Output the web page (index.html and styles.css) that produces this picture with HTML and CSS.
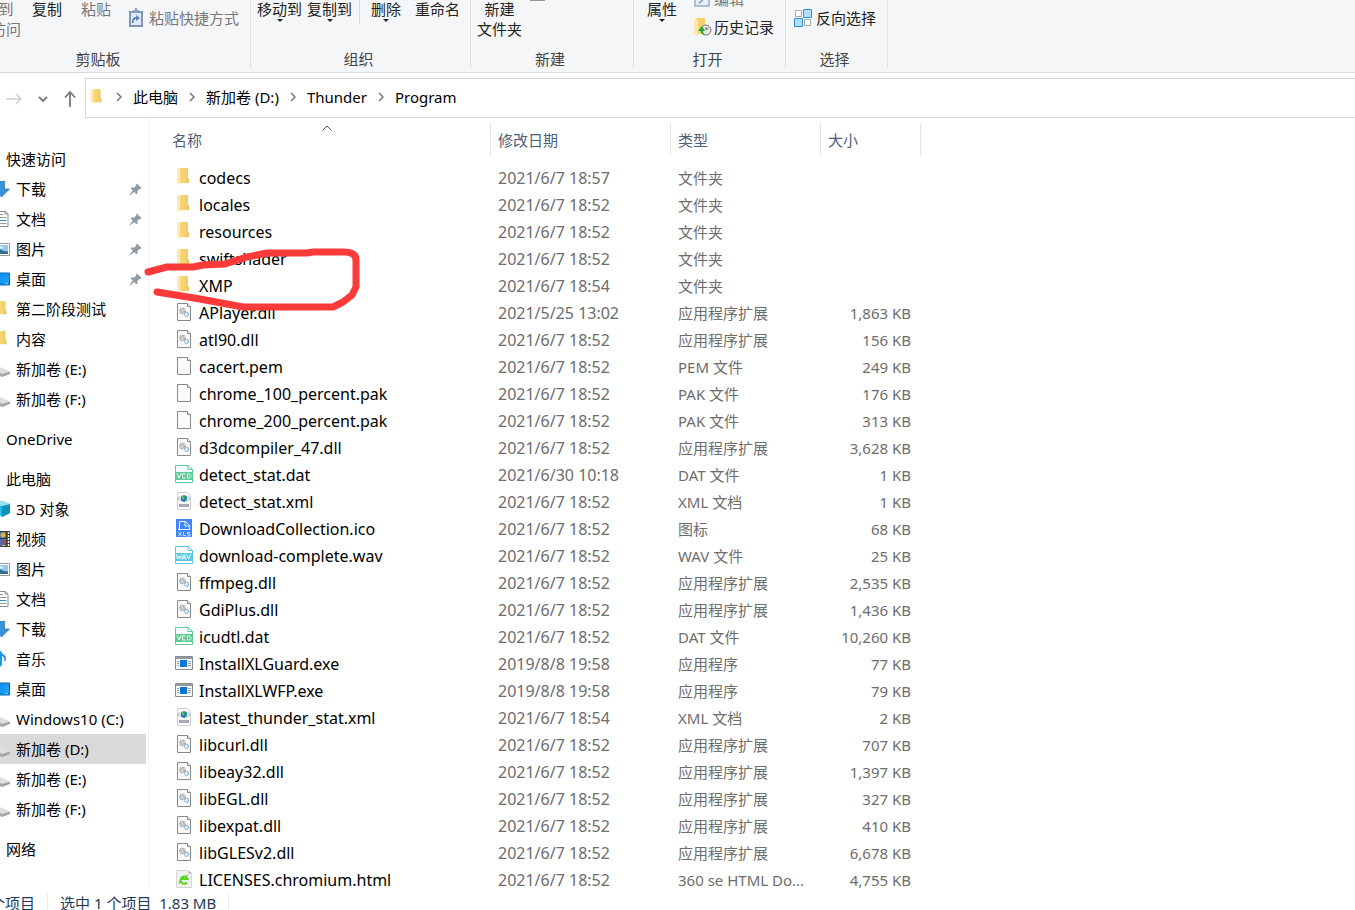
FILE: index.html
```html
<!DOCTYPE html>
<html lang="zh-CN">
<head>
<meta charset="utf-8">
<title>Program</title>
<link rel="stylesheet" href="styles.css">
</head>
<body>
<svg class="defs" aria-hidden="true">
  <defs>
    <linearGradient id="g-folder" x1="0" x2="1"><stop offset="0" stop-color="#fbdc82"/><stop offset="1" stop-color="#f0c95f"/></linearGradient>
    <linearGradient id="g-blue" x1="0" y1="0" x2="1" y2="1"><stop offset="0" stop-color="#0c86ea"/><stop offset="1" stop-color="#22a7fb"/></linearGradient>
  </defs>
  <symbol id="folder" viewBox="0 0 18 18"><path d="M4 0h9v10.500h1V15H5z" fill="url(#g-folder)"/><path d="M2 0l4 2v15l-4-2z" fill="#ffe9ac"/><path d="M13 10.500v4.500M6 2v13" stroke="#e9bd55" stroke-width=".6"/></symbol>
  <symbol id="page" viewBox="0 0 18 18"><path d="M2.500.5h10l3 3v14h-13z" fill="#fafafa" stroke="#87898b"/><path d="M12.500.5v3h3" fill="#fff" stroke="#87898b"/></symbol>
  <symbol id="dll" viewBox="0 0 18 18"><use href="#page"/><circle cx="7.500" cy="8" r="2.600" fill="none" stroke="#8d9398" stroke-width="1.500" stroke-dasharray="1 .6"/><circle cx="7.500" cy="8" r="1.300" fill="none" stroke="#8d9398" stroke-width=".7"/><circle cx="11.500" cy="11.300" r="2" fill="#e9f4fb" stroke="#78aace" stroke-width="1.300" stroke-dasharray="1 .5"/></symbol>
  <symbol id="vcd" viewBox="0 0 18 18"><path d="M.5 17.500V.5H13l4.500 4v13z" fill="#fff" stroke="#5ccb94"/><path d="M13 0v4.500h5" fill="none" stroke="#5ccb94"/><path d="M0 7h18v8H0z" fill="#5ccb94"/><path d="M2 8.500l2 4.500 2-4.500M10.500 9H7.500v4h3M12.500 9h2l1.500 1.500v1L14.500 13h-2z" fill="none" stroke="#fff"/></symbol>
  <symbol id="wav" viewBox="0 0 18 18"><path d="M.5 17.500V.5H13l4.500 4v13z" fill="#fff" stroke="#5bc9e2"/><path d="M13 0v4.500h5" fill="none" stroke="#5bc9e2"/><path d="M0 7h18v8H0z" fill="#5bc9e2"/><path d="M1.500 8.500l1 4.500 1.500-3 1.500 3 1-4.500M7 13.500l2-5 2 5M8 12h2M11.500 8.500l2 4.500 2-4.500" fill="none" stroke="#fff"/></symbol>
  <symbol id="ico" viewBox="0 0 18 18"><path d="M1 0h16v18H1z" fill="#4285f6"/><path d="M4.500 11V2.500h6l4 4V11M10 2.500v4.500h4.500M3 10.500h12" fill="none" stroke="#fff" stroke-width=".9"/><path d="M3.500 13l3 4M6.500 13l-3 4M8.500 13v3.500h2.500M15 13.500h-2.500v1.500h2.500v2h-3" fill="none" stroke="#dbe8ff" stroke-width=".9"/></symbol>
  <symbol id="xml" viewBox="0 0 18 18"><path d="M2.500.5h10l3 3v14h-13z" fill="#f8f8f8" stroke="#d2d2d2"/><circle cx="9" cy="6.500" r="3.200" fill="#2277b8"/><path d="M7 4l3 1-1 2-2 .5zM10 7.500l2-1-1 3z" fill="#63c64f"/><path d="M5 4.500L3 6.500l2 2M13 4.500l2 2-2 2" fill="none" stroke="#58a8d0"/><path d="M4 12h10v3H4z" fill="#a9a8b9"/></symbol>
  <symbol id="exe" viewBox="0 0 18 18"><path d="M.5 2.500h17v13H.5z" fill="#fff" stroke="#858b91"/><path d="M1 3h16v2H1z" fill="#9299a0"/><path d="M5 6h7v7H5z" fill="#0875db"/><path d="M2 7.500h2M2 9.500h2M2 11.500h2M13 7.500h3M13 9.500h3M13 11.500h3" stroke="#91989e"/></symbol>
  <symbol id="html" viewBox="0 0 18 18"><path d="M1.500.5h12l3 3v14h-15z" fill="#f1f1f1" stroke="#d4d4d4"/><path d="M13.500.5v3h3z" fill="#aaa"/><path d="M12 12.500a3.600 3.600 0 1 1 .6-3.500H6" fill="none" stroke="#55d51b" stroke-width="2"/><path d="M4 14Q4 8 13 5" fill="none" stroke="#55d51b"/></symbol>
  <symbol id="pin" viewBox="0 0 14 14"><path d="M8.500.5l5 5-1 1-1-.3-2.500 2.500.3 2.300-1.300 1.200-2.500-2.500L1 13.500l-.6-.3L4 8.200 1.800 6 3 4.700l2.500.3L8 2.500l-.4-1z" fill="#909ba3"/></symbol>
  <symbol id="down" viewBox="0 0 16 16"><path d="M3.500 0h7v8h5L7.500 16-.5 8h4z" fill="#3993df" stroke="#2373b8" stroke-width=".7"/></symbol>
  <symbol id="doc" viewBox="0 0 16 16"><path d="M1 .5h10.500L14 3v12.500H1z" fill="#fff" stroke="#8b8d90"/><path d="M11 .5V3h3" fill="none" stroke="#8b8d90"/><path d="M3 3.500h6M3 6.500h9.500M3 12.500h9.500" stroke="#8d9ba5"/><path d="M3 9.500h9.500" stroke="#3e91cc"/></symbol>
  <symbol id="picture" viewBox="0 0 16 16"><path d="M.5 2.500h15v12H.5z" fill="#fff" stroke="#999"/><path d="M2 4h12v9H2z" fill="#8dcaf3"/><path d="M2 10l4-2 4 2 4 .5V13H2z" fill="#356b8b"/><path d="M2 5.500h7v2H2z" fill="#e7f6ff"/></symbol>
  <symbol id="desktop" viewBox="0 0 16 16"><path d="M.5 2h15v12H.5z" fill="url(#g-blue)" stroke="#0868b0"/><path d="M1 12.500h14" stroke="#0878c5"/><path d="M11 12.500h1M13 12.500h1" stroke="#fff"/></symbol>
  <symbol id="drive" viewBox="0 0 16 16"><path d="M0 8l6-1 10 4v2L8 16l-8-4z" fill="#a4a5a8"/><path d="M0 8l6-2 10 4.500L8 13z" fill="#dedfe1"/></symbol>
  <symbol id="cube" viewBox="0 0 16 16"><path d="M1 3l7-3 8 3v9l-8 4-7-4z" fill="#28b8da"/><path d="M8 5l8-2v9l-8 4z" fill="#0d91bd"/><path d="M1 3l7-3 8 3-8 2z" fill="#91e4ef"/></symbol>
  <symbol id="video" viewBox="0 0 16 16"><path d="M0 0h16v16H0z" fill="#3b3b3b"/><path d="M3 1h9v6H3zM3 8h9v7H3z" fill="#466eb3"/><circle cx="9" cy="4" r="2.500" fill="#e3b72e"/><path d="M7 10h5l-2 3z" fill="#c93631"/><path d="M8 14.500h3" stroke="#efce32"/><path d="M14.500 1v15" stroke="#fff" stroke-width="1.500" stroke-dasharray="2 1"/></symbol>
  <symbol id="music" viewBox="0 0 16 16"><path d="M7 0c1 4 6 4 5 9l-2 2c1-3 0-5-2-6v8c0 4-7 4-7 0 0-3 4-4 5-2V0z" fill="#1696e4"/></symbol>
  <symbol id="pc" viewBox="0 0 16 16"><path d="M0 3h16v9H0zM4 14h8" fill="#dceefa" stroke="#69727a" stroke-width="2"/></symbol>
  <symbol id="chev" viewBox="0 0 8 10"><path d="M2 1l4 4-4 4" fill="none" stroke="#777" stroke-width="1.500"/></symbol>
  <symbol id="blank" viewBox="0 0 16 16"></symbol>
</svg>

<header class="ribbon">
  <section class="group group-clipboard">
    <div class="commands">
      <button class="cmd muted">固定到<br>快速访问</button>
      <button class="cmd">复制</button>
      <button class="cmd cmd-paste muted">粘贴</button>
      <button class="cmd-row muted"><svg width="16" height="20" viewBox="0 0 16 20"><path d="M2 4h12v14H2z" fill="#dfe9f7" stroke="#8196be" stroke-width="2"/><path d="M5 2h2V0h2v2h2v3H5z" fill="#8ca0c4"/><path d="M4 15c0-4 1-6 4-6V7l4 3-4 3v-2c-2 0-3 2-2 4z" fill="#5d83b6"/></svg>粘贴快捷方式</button>
    </div>
    <h2>剪贴板</h2>
  </section>
  <section class="group group-organize">
    <div class="commands">
      <button class="cmd drop">移动到</button>
      <button class="cmd drop">复制到</button>
      <span class="rule"></span>
      <button class="cmd drop">删除</button>
      <button class="cmd cmd-rename">重命名</button>
    </div>
    <h2>组织</h2>
  </section>
  <section class="group group-new">
    <div class="commands"><button class="cmd">新建<br>文件夹</button><span class="new-item"></span></div>
    <h2>新建</h2>
  </section>
  <section class="group group-open">
    <div class="commands">
      <button class="cmd drop">属性</button>
      <div class="stack">
        <button class="cmd-row muted"><svg width="18" height="18" viewBox="0 0 18 18"><path d="M1 1h14v15H1z" fill="#e8f1fb" stroke="#9dabca" stroke-width="1.500"/><path d="M4 13l8-9 2 2-8 8z" fill="#9fb0ce"/></svg>编辑</button>
        <button class="cmd-row"><svg width="18" height="18" viewBox="0 0 18 18"><path d="M2 0h9v16H3z" fill="#f5d170"/><path d="M0 0l4 2v16l-4-2z" fill="#ffeaad"/><circle cx="12" cy="12" r="5" fill="#e7e7e7" stroke="#777"/><path d="M12 9v3l2.500-2" fill="none" stroke="#666"/><path d="M12 17c-5 0-5-3-5-4H4l4-5 3 5H9c0 2 1 3 3 4z" fill="#27a735"/></svg>历史记录</button>
      </div>
    </div>
    <h2>打开</h2>
  </section>
  <section class="group group-select">
    <div class="commands"><button class="cmd-row"><svg width="18" height="18" viewBox="0 0 18 18"><path d="M1.500 1.500h6v6h-6zM10.500 10.500h6v6h-6z" fill="#fff" stroke="#aaa"/><path d="M9.500.5h8v8h-8zM.5 9.500h8v8h-8z" fill="#b3defc" stroke="#2b90dc"/></svg>反向选择</button></div>
    <h2>选择</h2>
  </section>
</header>

<div class="location">
  <div class="history">
    <button aria-label="前进"><svg width="16" height="12" viewBox="0 0 16 12"><path d="M0 6h15M10 1l5 5-5 5" fill="none" stroke="#d0d0d0" stroke-width="1.500"/></svg></button>
    <button aria-label="最近位置"><svg width="10" height="8" viewBox="0 0 10 8"><path d="M1 2l4 4 4-4" fill="none" stroke="#777" stroke-width="1.800"/></svg></button>
    <button aria-label="向上"><svg width="12" height="16" viewBox="0 0 12 16"><path d="M6 16V1M1 6.500L6 1l5 5.500" fill="none" stroke="#777" stroke-width="1.800"/></svg></button>
  </div>
  <nav class="crumbs" aria-label="地址">
    <svg class="place"><use href="#folder"/></svg>
    <svg class="chev"><use href="#chev"/></svg><a href="#pc">此电脑</a>
    <svg class="chev"><use href="#chev"/></svg><a href="#d">新加卷 (D:)</a>
    <svg class="chev"><use href="#chev"/></svg><a href="#thunder">Thunder</a>
    <svg class="chev"><use href="#chev"/></svg><a href="#program">Program</a>
  </nav>
</div>

<div class="body">
  <nav class="tree" aria-label="导航窗格">
    <div class="branch">
      <a class="root" href="#"><svg><use href="#blank"/></svg>快速访问</a>
      <a href="#"><svg><use href="#down"/></svg>下载<svg class="pin"><use href="#pin"/></svg></a>
      <a href="#"><svg><use href="#doc"/></svg>文档<svg class="pin"><use href="#pin"/></svg></a>
      <a href="#"><svg><use href="#picture"/></svg>图片<svg class="pin"><use href="#pin"/></svg></a>
      <a href="#"><svg><use href="#desktop"/></svg>桌面<svg class="pin"><use href="#pin"/></svg></a>
      <a href="#"><svg><use href="#folder"/></svg>第二阶段测试</a>
      <a href="#"><svg><use href="#folder"/></svg>内容</a>
      <a href="#"><svg><use href="#drive"/></svg>新加卷 (E:)</a>
      <a href="#"><svg><use href="#drive"/></svg>新加卷 (F:)</a>
    </div>
    <div class="branch"><a class="root" href="#"><svg><use href="#blank"/></svg>OneDrive</a></div>
    <div class="branch">
      <a class="root" href="#"><svg class="pc"><use href="#pc"/></svg>此电脑</a>
      <a href="#"><svg><use href="#cube"/></svg>3D 对象</a>
      <a href="#"><svg><use href="#video"/></svg>视频</a>
      <a href="#"><svg><use href="#picture"/></svg>图片</a>
      <a href="#"><svg><use href="#doc"/></svg>文档</a>
      <a href="#"><svg><use href="#down"/></svg>下载</a>
      <a href="#"><svg><use href="#music"/></svg>音乐</a>
      <a href="#"><svg><use href="#desktop"/></svg>桌面</a>
      <a href="#"><svg><use href="#drive"/></svg>Windows10 (C:)</a>
      <a class="selected" href="#"><svg><use href="#drive"/></svg>新加卷 (D:)</a>
      <a href="#"><svg><use href="#drive"/></svg>新加卷 (E:)</a>
      <a href="#"><svg><use href="#drive"/></svg>新加卷 (F:)</a>
    </div>
    <div class="branch"><a class="root" href="#"><svg><use href="#blank"/></svg>网络</a></div>
  </nav>

  <main class="files">
    <table>
      <colgroup><col class="col-name"><col class="col-date"><col class="col-type"><col class="col-size"></colgroup>
      <thead><tr><th class="sorted"><button>名称</button><svg class="sort" viewBox="0 0 10 6"><path d="M.5 5.500L5 1l4.500 4.500" fill="none" stroke="#555"/></svg></th><th><button>修改日期</button></th><th><button>类型</button></th><th><button>大小</button></th></tr></thead>
      <tbody>
        <tr><td><svg><use href="#folder"/></svg>codecs</td><td>2021/6/7 18:57</td><td>文件夹</td><td></td></tr>
        <tr><td><svg><use href="#folder"/></svg>locales</td><td>2021/6/7 18:52</td><td>文件夹</td><td></td></tr>
        <tr><td><svg><use href="#folder"/></svg>resources</td><td>2021/6/7 18:52</td><td>文件夹</td><td></td></tr>
        <tr><td><svg><use href="#folder"/></svg>swiftshader</td><td>2021/6/7 18:52</td><td>文件夹</td><td></td></tr>
        <tr><td><svg><use href="#folder"/></svg>XMP</td><td>2021/6/7 18:54</td><td>文件夹</td><td></td></tr>
        <tr><td><svg><use href="#dll"/></svg>APlayer.dll</td><td>2021/5/25 13:02</td><td>应用程序扩展</td><td>1,863 KB</td></tr>
        <tr><td><svg><use href="#dll"/></svg>atl90.dll</td><td>2021/6/7 18:52</td><td>应用程序扩展</td><td>156 KB</td></tr>
        <tr><td><svg><use href="#page"/></svg>cacert.pem</td><td>2021/6/7 18:52</td><td>PEM 文件</td><td>249 KB</td></tr>
        <tr><td><svg><use href="#page"/></svg>chrome_100_percent.pak</td><td>2021/6/7 18:52</td><td>PAK 文件</td><td>176 KB</td></tr>
        <tr><td><svg><use href="#page"/></svg>chrome_200_percent.pak</td><td>2021/6/7 18:52</td><td>PAK 文件</td><td>313 KB</td></tr>
        <tr><td><svg><use href="#dll"/></svg>d3dcompiler_47.dll</td><td>2021/6/7 18:52</td><td>应用程序扩展</td><td>3,628 KB</td></tr>
        <tr><td><svg><use href="#vcd"/></svg>detect_stat.dat</td><td>2021/6/30 10:18</td><td>DAT 文件</td><td>1 KB</td></tr>
        <tr><td><svg><use href="#xml"/></svg>detect_stat.xml</td><td>2021/6/7 18:52</td><td>XML 文档</td><td>1 KB</td></tr>
        <tr><td><svg><use href="#ico"/></svg>DownloadCollection.ico</td><td>2021/6/7 18:52</td><td>图标</td><td>68 KB</td></tr>
        <tr><td><svg><use href="#wav"/></svg>download-complete.wav</td><td>2021/6/7 18:52</td><td>WAV 文件</td><td>25 KB</td></tr>
        <tr><td><svg><use href="#dll"/></svg>ffmpeg.dll</td><td>2021/6/7 18:52</td><td>应用程序扩展</td><td>2,535 KB</td></tr>
        <tr><td><svg><use href="#dll"/></svg>GdiPlus.dll</td><td>2021/6/7 18:52</td><td>应用程序扩展</td><td>1,436 KB</td></tr>
        <tr><td><svg><use href="#vcd"/></svg>icudtl.dat</td><td>2021/6/7 18:52</td><td>DAT 文件</td><td>10,260 KB</td></tr>
        <tr><td><svg><use href="#exe"/></svg>InstallXLGuard.exe</td><td>2019/8/8 19:58</td><td>应用程序</td><td>77 KB</td></tr>
        <tr><td><svg><use href="#exe"/></svg>InstallXLWFP.exe</td><td>2019/8/8 19:58</td><td>应用程序</td><td>79 KB</td></tr>
        <tr><td><svg><use href="#xml"/></svg>latest_thunder_stat.xml</td><td>2021/6/7 18:54</td><td>XML 文档</td><td>2 KB</td></tr>
        <tr><td><svg><use href="#dll"/></svg>libcurl.dll</td><td>2021/6/7 18:52</td><td>应用程序扩展</td><td>707 KB</td></tr>
        <tr><td><svg><use href="#dll"/></svg>libeay32.dll</td><td>2021/6/7 18:52</td><td>应用程序扩展</td><td>1,397 KB</td></tr>
        <tr><td><svg><use href="#dll"/></svg>libEGL.dll</td><td>2021/6/7 18:52</td><td>应用程序扩展</td><td>327 KB</td></tr>
        <tr><td><svg><use href="#dll"/></svg>libexpat.dll</td><td>2021/6/7 18:52</td><td>应用程序扩展</td><td>410 KB</td></tr>
        <tr><td><svg><use href="#dll"/></svg>libGLESv2.dll</td><td>2021/6/7 18:52</td><td>应用程序扩展</td><td>6,678 KB</td></tr>
        <tr><td><svg><use href="#html"/></svg>LICENSES.chromium.html</td><td>2021/6/7 18:52</td><td>360 se HTML Do...</td><td>4,755 KB</td></tr>
      </tbody>
    </table>
  </main>
  <svg class="marker" viewBox="140 240 230 80" aria-hidden="true"><path d="M148 272L167 267H193L203 265 225 264 247 257 267 253H307L313 252H344Q356 252 356 260V287L352 295 343 302 333 307H243L200 299 157 292" fill="none" stroke="#fc3a3a" stroke-width="7" stroke-linecap="round" stroke-linejoin="round"/></svg>
</div>

<footer class="status"><span>个项目</span><span>选中 1 个项目&nbsp; 1.83 MB</span></footer>
</body>
</html>
```

FILE: styles.css
```css
* { box-sizing: border-box; }
body {
  margin: 0;
  height: 100vh;
  display: flex;
  flex-direction: column;
  overflow: hidden;
  background: #fff;
  color: #000;
  font: 15px/20px "Noto Sans", "Noto Sans CJK SC", sans-serif;
}
button {
  font: inherit;
  color: inherit;
  background: none;
  border: 0;
  padding: 0;
  white-space: nowrap;
}
a { color: inherit; text-decoration: none; white-space: nowrap; }
svg { flex: none; display: block; }
.defs { position: absolute; width: 0; height: 0; }

.ribbon {
  display: flex;
  flex: none;
  padding-bottom: 3px;
  background: #f5f6f7;
  border-bottom: 1px solid #d9dadb;
}
.group {
  display: flex;
  flex-direction: column;
  border-right: 1px solid #e2e3e4;
}
.group h2 {
  margin: 0;
  padding-right: 4px;
  font-size: 15px;
  font-weight: 400;
  line-height: 20px;
  text-align: center;
  color: #444;
}
.commands { display: flex; align-items: flex-start; height: 50px; margin-top: -1px; color: #222; }
.muted { color: #777; }
.cmd { position: relative; flex: none; }
.drop::after {
  content: "";
  display: block;
  width: 0;
  margin: 0 auto;
  border: 3px solid transparent;
  border-top-color: #222;
  border-bottom: 0;
}
.cmd-row { display: flex; align-items: center; gap: 4px; }
.group-clipboard { width: 301px; margin-left: -50px; }
.group-clipboard .commands { gap: 11px; padding-left: 11px; }
.group-clipboard .cmd-paste { margin-left: 8px; }
.group-clipboard .cmd-row { margin: 9px 0 0 6px; gap: 5px; }
.group-organize { width: 220px; }
.group-organize .commands { padding-left: 6px; gap: 5px; }
.rule { width: 1px; height: 25px; margin: 0 6px 0 2px; background: #dcddde; }
.cmd-rename { margin-left: 9px; }
.group-new { width: 163px; }
.group-new .commands { padding-left: 6px; gap: 8px; }
.new-item { width: 15px; height: 2px; background: #999; }
.group-open { width: 152px; }
.group-open .commands { padding-left: 13px; gap: 17px; }
.stack { display: flex; flex-direction: column; gap: 8px; margin-top: -10px; }
.stack .cmd-row { gap: 2px; }
.group-select { width: 102px; }
.group-select .commands { padding: 9px 0 0 8px; }

.location { display: flex; flex: none; padding-top: 5px; }
.history { display: flex; align-items: center; width: 85px; padding: 2px 0 0 6px; gap: 16px; }
.crumbs {
  display: flex;
  align-items: center;
  flex: 1;
  gap: 10px;
  height: 40px;
  padding: 0 0 2px 3px;
  border: 1px solid #d9d9d9;
  border-right: 0;
}
.place { width: 16px; height: 18px; }
.chev { width: 8px; height: 10px; }

.body { position: relative; display: flex; flex: 1; min-height: 0; overflow: hidden; }
.tree {
  flex: none;
  width: 179px;
  margin-left: -30px;
  padding: 26px 2px 0 0;
  border-right: 1px solid #f2f2f2;
}
.branch { margin-bottom: 10px; }
.tree a { display: flex; align-items: center; gap: 6px; height: 30px; padding: 0 4px 0 24px; }
.tree svg { width: 16px; height: 16px; }
.tree .root { padding-left: 14px; }
.tree .pin { width: 13px; height: 13px; margin-left: auto; }
.tree .selected { background: #d9d9d9; }

.files { flex: 1; padding-top: 5px; }
table { width: 772px; table-layout: fixed; border-collapse: separate; border-spacing: 0; }
.col-name { width: 342px; }
.col-date { width: 180px; }
.col-type { width: 150px; }
.col-size { width: 100px; }
th {
  position: relative;
  height: 33px;
  padding: 0 0 0 7px;
  border-right: 1px solid #e5e5e5;
  text-align: left;
  font-weight: 400;
  color: #4c607a;
}
th:first-child { padding-left: 23px; }
.sort { position: absolute; top: 2px; left: 173px; width: 10px; height: 6px; }
tbody::before { content: ""; display: block; height: 8px; }
td { height: 27px; padding: 0 0 0 7px; color: #6d6d6d; white-space: nowrap; }
td:first-child { display: flex; align-items: center; gap: 6px; padding-left: 26px; color: #000; font-size: 16px; }
td:nth-child(2) { font-size: 16px; }
td:last-child { padding: 0 10px 0 0; text-align: right; }
td svg { width: 18px; height: 18px; margin-bottom: 2px; }
.marker { position: absolute; left: 140px; top: 122px; width: 230px; height: 80px; }

.status { display: flex; flex: none; height: 20px; padding-top: 3px; color: #1e395b; }
.status span { padding: 0 12px; border-right: 1px solid #eee; white-space: nowrap; }
.status span:first-child { margin-left: -22px; }
```
